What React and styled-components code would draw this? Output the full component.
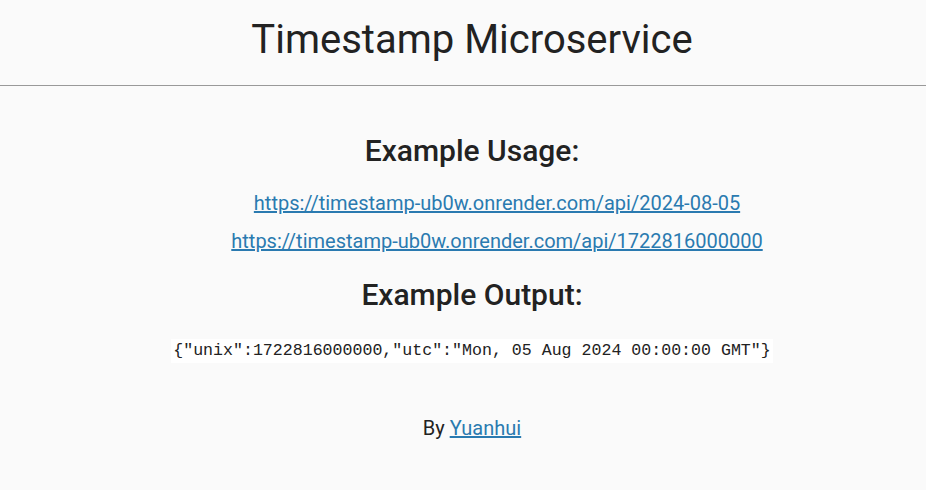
import styled, { createGlobalStyle } from "styled-components";

const GlobalStyle = createGlobalStyle`
  html, body {
    margin: 0;
    padding: 0;
    background: #fafafa;
    color: #222;
    font-family: Roboto, "Liberation Sans", sans-serif;
  }
`;

const App = () => {
  return (
    <>
      <GlobalStyle />
      <Header>
        <h1>Timestamp Microservice</h1>
      </Header>
      <Main>
        <h2>Example Usage:</h2>
        <Links>
          <li>
            <a href="#">https://timestamp-ub0w.onrender.com/api/2024-08-05</a>
          </li>
          <li>
            <a href="#">https://timestamp-ub0w.onrender.com/api/1722816000000</a>
          </li>
        </Links>
        <h2>Example Output:</h2>
        <Code>
          {'{"unix":1722816000000,"utc":"Mon, 05 Aug 2024 00:00:00 GMT"}'}
        </Code>
      </Main>
      <Footer>
        By <a href="#">Yuanhui</a>
      </Footer>
    </>
  );
};

const Header = styled.header`
  border-bottom: solid 1px #999;
  height: 85px;
  padding-left: 18px;
  text-align: center;
  & h1 {
    margin: 0;
    padding-top: 16px;
    font-size: 40px;
    font-weight: 400;
    line-height: 48px;
  }
`;

const Main = styled.main`
  display: flex;
  flex-direction: column;
  align-items: center;
  padding: 47px 0 0 18px;
  & h2 {
    margin: 0;
    font-size: 30px;
    font-weight: 500;
    line-height: 36px;
  }
`;

const Links = styled.ul`
  list-style: none;
  margin: 15px 0 17px;
  padding: 0 0 0 50px;
  text-align: center;
  & li {
    font-size: 20px;
    line-height: 38px;
  }
  & a {
    color: #2a7ab0;
  }
`;

const Code = styled.code`
  margin-top: 26px;
  background: #fff;
  padding: 1px 2px;
  font-family: "Liberation Mono", monospace;
  font-size: 16.6px;
  line-height: 22px;
  color: #222;
`;

const Footer = styled.footer`
  padding: 52px 0 0 18px;
  text-align: center;
  font-size: 20px;
  line-height: 26px;
  & a {
    color: #2a7ab0;
  }
`;

export default App;
